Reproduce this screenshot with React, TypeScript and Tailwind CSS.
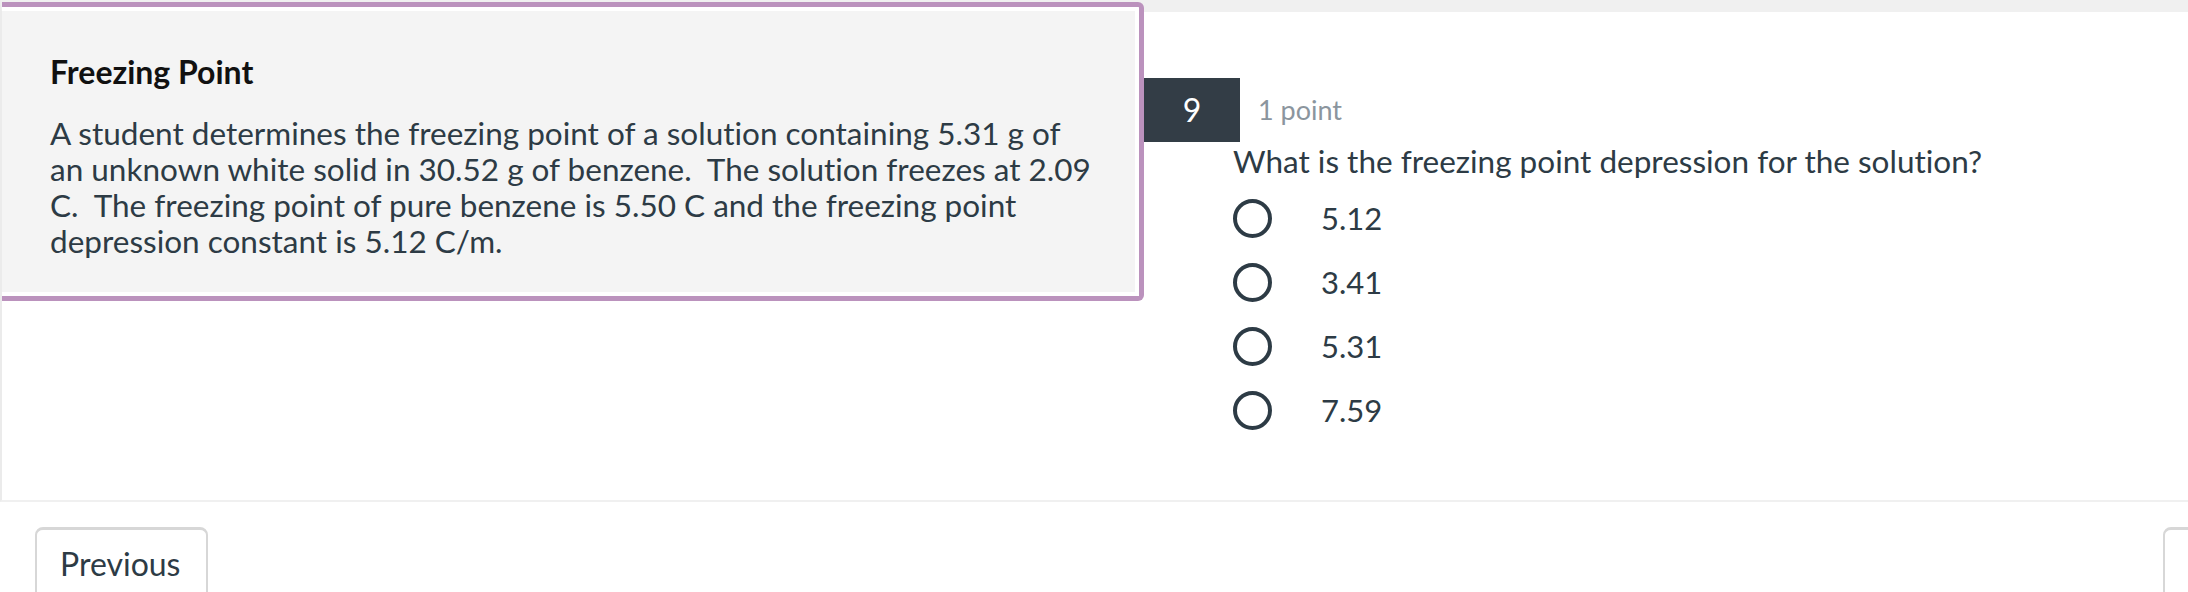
import React from "react";

const options = ["5.12", "3.41", "5.31", "7.59"];

export default function App() {
  return (
    <div className="w-[2188px] h-[592px] overflow-hidden bg-white font-['Lato','Noto_Sans',sans-serif] text-[#2d3b45] [font-variant-ligatures:none]">
      {/* Question area */}
      <div className="h-[502px] border-l-2 border-l-[#ebebeb] border-t-[12px] border-t-[#f0f0f0] border-b-2 border-b-[#f0f0f0]">
        <div className="flex items-start -mt-[10px]">
          {/* Passage card */}
          <div className="w-[1142px] shrink-0 rounded-r-[6px] border-[5px] border-l-0 border-[#bb92bd] bg-white p-[4px] pl-0">
            <div className="bg-[#f4f4f4] pl-[48px] pr-[44px] pt-[43px] pb-[33px]">
              <h2 className="text-[32px] leading-[36px] font-bold text-[#111]">Freezing Point</h2>
              <p className="mt-[25px] text-[31.5px] leading-[36px]">
                A student determines the freezing point of a solution containing 5.31 g of an unknown white solid in 30.52 g of benzene.&nbsp; The solution freezes at 2.09 C.&nbsp; The freezing point of pure benzene is 5.50 C and the freezing point depression constant is 5.12 C/m.
              </p>
            </div>
          </div>

          {/* Question */}
          <div className="flex-1 pt-[76px]">
            <div className="flex items-center">
              <div className="w-[96px] h-[64px] bg-[#333d46] text-white text-[32px] flex items-center justify-center">9</div>
              <span className="ml-[18px] text-[27px] text-[#8b959e]">1 point</span>
            </div>
            <div className="pl-[89px]">
              <p className="mt-[1px] text-[31.5px] leading-[36px]">What is the freezing point depression for the solution?</p>
              <div className="mt-[7px]">
                {options.map((o) => (
                  <div key={o} className="flex items-center h-[64px]">
                    <span className="w-[39px] h-[39px] rounded-full border-[4.5px] border-[#2d3b45] shrink-0" />
                    <span className="ml-[49px] text-[31px]">{o}</span>
                  </div>
                ))}
              </div>
            </div>
          </div>
        </div>
      </div>

      {/* Footer nav */}
      <div className="flex justify-between pt-[25px] pl-[35px]">
        <button className="w-[173px] h-[90px] rounded-[8px] border-2 border-[#d7d7d7] border-t-[3px] bg-white text-left pl-[23px] pb-[18px] text-[32px] text-[#2d3b45]">
          Previous
        </button>
        <button className="w-[60px] h-[90px] -mr-[35px] rounded-[8px] border-2 border-[#d7d7d7] border-t-[3px] bg-white" aria-label="Next" />
      </div>
    </div>
  );
}
